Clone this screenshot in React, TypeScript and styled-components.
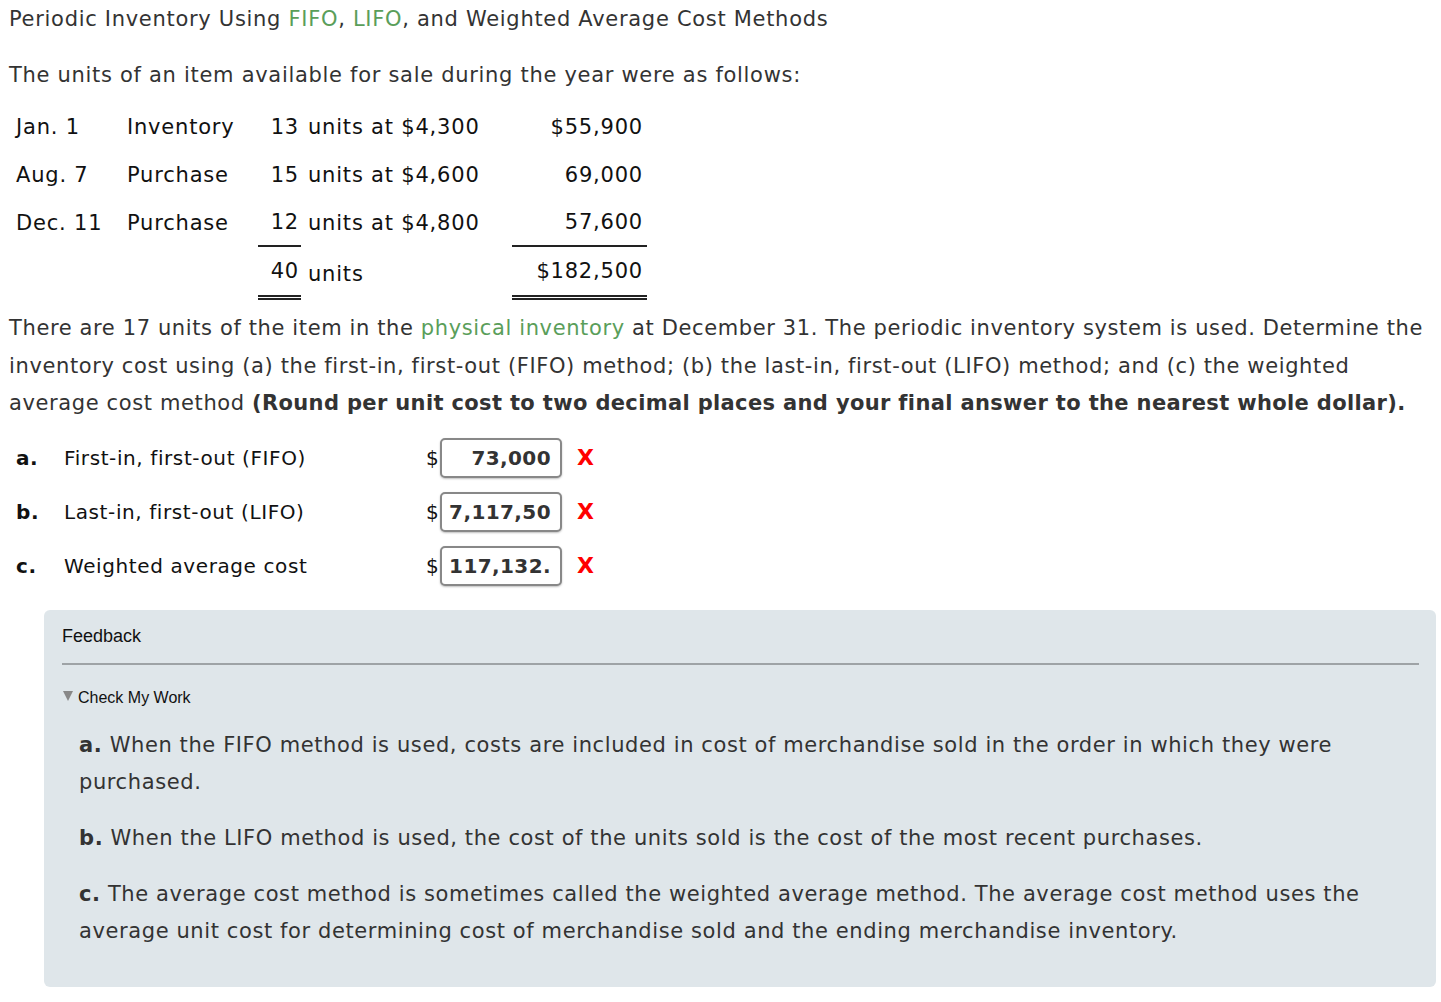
import React from 'react'
import styled, { createGlobalStyle } from 'styled-components'

const GlobalStyle = createGlobalStyle`
  body {
    margin: 0;
    background: #fff;
    font-family: "DejaVu Sans", Verdana, sans-serif;
    color: #333;
  }
`

const Page = styled.div`
  width: 1441px;
  padding: 6px 0 0 9px;
  box-sizing: border-box;
`

const Title = styled.div`
  font-size: 21px;
  letter-spacing: 0.7px;
  line-height: 26px;
  color: #333;
`

const Link = styled.span`
  color: #5a9e5a;
`

const Intro = styled.p`
  font-size: 21px;
  letter-spacing: 0.7px;
  line-height: 26px;
  margin: 30px 0 0;
`

const Ledger = styled.div`
  display: grid;
  grid-template-columns: 111px 132px 43px 211px 135px;
  grid-template-rows: 48px 48px 48px 53px;
  margin: 15px 0 0 6px;
  width: max-content;
  font-size: 21px;
  letter-spacing: 0.8px;
  color: #111;
  white-space: nowrap;
`

const Cell = styled.div<{ $align?: 'left' | 'right'; $rule?: 'single' | 'double'; $inset?: number }>`
  display: flex;
  align-items: center;
  justify-content: ${p => (p.$align === 'right' ? 'flex-end' : 'flex-start')};
  padding: ${p => (p.$align === 'right' ? `0 ${p.$inset ?? 5}px 0 0` : '0 0 0 1px')};
  box-sizing: border-box;
  border-bottom: ${p =>
    p.$rule === 'single' ? '2px solid #222' : p.$rule === 'double' ? '5px double #222' : 'none'};
`

const UnitText = styled(Cell)`
  padding-left: 7px;
`

const Prose = styled.p`
  font-size: 21px;
  letter-spacing: 0.62px;
  line-height: 37.5px;
  margin: 10px 0 0;
  color: #333;
  width: 1428px;

  b {
    letter-spacing: 0.35px;
  }
`

const Answers = styled.div`
  margin-top: 15px;
  display: flex;
  flex-direction: column;
  gap: 14px;
`

const AnswerRow = styled.div`
  display: flex;
  align-items: center;
  height: 40px;
  font-size: 20px;
  letter-spacing: 0.6px;
  color: #111;
`

const Letter = styled.span`
  width: 48px;
  padding-left: 7px;
  font-weight: bold;
`

const AnswerLabel = styled.span`
  width: 362px;
`

const Dollar = styled.span`
  width: 14px;
`

const AnswerBox = styled.div`
  width: 122px;
  height: 40px;
  box-sizing: border-box;
  border: 2px solid #888;
  border-radius: 5px;
  box-shadow: 0 1px 2px rgba(0, 0, 0, 0.25);
  display: flex;
  align-items: center;
  justify-content: flex-end;
  padding-right: 9px;
  font-weight: bold;
  letter-spacing: 0.4px;
  color: #333;
  background: #fff;
`

const WrongMark = styled.span`
  margin-left: 15px;
  color: #f00;
  font-weight: bold;
  font-size: 22px;
  letter-spacing: 0;
`

const FeedbackPanel = styled.section`
  margin: 24px 5px 16px 35px;
  background: #dfe6ea;
  border-radius: 6px;
  padding: 14px 17px 37px 18px;
`

const FeedbackHead = styled.div`
  font-family: "Liberation Sans", Arial, sans-serif;
  font-size: 18px;
  line-height: 24px;
  color: #111;
  padding-bottom: 15px;
  border-bottom: 2px solid #9ea3a6;
`

const Toggle = styled.div`
  display: flex;
  align-items: center;
  margin-top: 24px;
  font-family: "Liberation Sans", Arial, sans-serif;
  font-size: 16px;
  color: #111;
  gap: 5px;
`

const Arrow = styled.span`
  width: 0;
  height: 0;
  border-left: 5px solid transparent;
  border-right: 5px solid transparent;
  border-top: 10px solid #888;
  margin: -4px 0 0 1px;
`

const Notes = styled.div`
  padding-left: 17px;
  margin-top: 20px;
  display: flex;
  flex-direction: column;
  gap: 19px;
`

const Note = styled.p`
  margin: 0;
  font-size: 21px;
  letter-spacing: 0.6px;
  line-height: 37px;
  color: #333;
`

const rows = [
  { date: 'Jan. 1', kind: 'Inventory', qty: '13', price: 'units at $4,300', amount: '$55,900' },
  { date: 'Aug. 7', kind: 'Purchase', qty: '15', price: 'units at $4,600', amount: '69,000' },
  { date: 'Dec. 11', kind: 'Purchase', qty: '12', price: 'units at $4,800', amount: '57,600' },
]

const answers = [
  { letter: 'a.', label: 'First-in, first-out (FIFO)', value: '73,000' },
  { letter: 'b.', label: 'Last-in, first-out (LIFO)', value: '7,117,50' },
  { letter: 'c.', label: 'Weighted average cost', value: '117,132.' },
]

export default function App() {
  return (
    <Page>
      <GlobalStyle />
      <Title>
        Periodic Inventory Using <Link>FIFO</Link>, <Link>LIFO</Link>, and Weighted Average Cost Methods
      </Title>
      <Intro>The units of an item available for sale during the year were as follows:</Intro>

      <Ledger>
        {rows.map((r, i) => {
          const last = i === rows.length - 1
          return (
            <React.Fragment key={r.date}>
              <Cell>{r.date}</Cell>
              <Cell>{r.kind}</Cell>
              <Cell $align="right" $inset={2} $rule={last ? 'single' : undefined}>{r.qty}</Cell>
              <UnitText>{r.price}</UnitText>
              <Cell $align="right" $inset={4} $rule={last ? 'single' : undefined}>{r.amount}</Cell>
            </React.Fragment>
          )
        })}
        <Cell />
        <Cell />
        <Cell $align="right" $inset={2} $rule="double">40</Cell>
        <UnitText>units</UnitText>
        <Cell $align="right" $inset={4} $rule="double">$182,500</Cell>
      </Ledger>

      <Prose>
        There are 17 units of the item in the <Link>physical inventory</Link> at December 31. The periodic
        inventory system is used. Determine the inventory cost using (a) the first-in, first-out (FIFO)
        method; (b) the last-in, first-out (LIFO) method; and (c) the weighted average cost method{' '}
        <b>(Round per unit cost to two decimal places and your final answer to the nearest whole dollar).</b>
      </Prose>

      <Answers>
        {answers.map(a => (
          <AnswerRow key={a.letter}>
            <Letter>{a.letter}</Letter>
            <AnswerLabel>{a.label}</AnswerLabel>
            <Dollar>$</Dollar>
            <AnswerBox>{a.value}</AnswerBox>
            <WrongMark>X</WrongMark>
          </AnswerRow>
        ))}
      </Answers>

      <FeedbackPanel>
        <FeedbackHead>Feedback</FeedbackHead>
        <Toggle>
          <Arrow />
          Check My Work
        </Toggle>
        <Notes>
          <Note>
            <b>a.</b> When the FIFO method is used, costs are included in cost of merchandise sold in the order in
            which they were purchased.
          </Note>
          <Note>
            <b>b.</b> When the LIFO method is used, the cost of the units sold is the cost of the most recent
            purchases.
          </Note>
          <Note>
            <b>c.</b> The average cost method is sometimes called the weighted average method. The average cost
            method uses the average unit cost for determining cost of merchandise sold and the ending merchandise
            inventory.
          </Note>
        </Notes>
      </FeedbackPanel>
    </Page>
  )
}
